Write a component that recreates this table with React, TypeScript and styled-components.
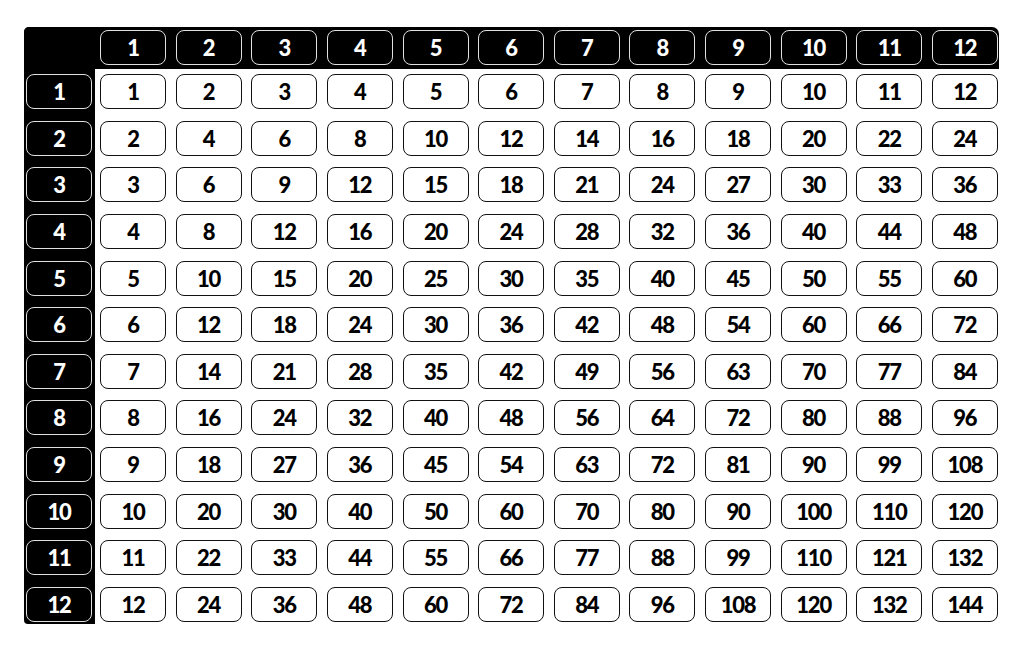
import React from 'react';
import styled, { createGlobalStyle } from 'styled-components';

const GlobalStyle = createGlobalStyle`
  html, body {
    margin: 0;
    padding: 0;
    background: #fff;
  }
  body {
    font-family: Lato, "Open Sans", sans-serif;
  }
`;

const Page = styled.div`
  width: 1024px;
  height: 652px;
  padding: 27px 0 0 24px;
  box-sizing: border-box;
`;

const Board = styled.div`
  width: 975px;
  height: 597px;
  display: grid;
  grid-template-columns: 71px 1fr;
  grid-template-rows: 42px 1fr;
  background: #000;
  border-radius: 5px 7px 0 4px;
  overflow: hidden;
`;

const Corner = styled.div`
  background: #000;
`;

const HeaderRow = styled.div`
  display: flex;
  justify-content: space-between;
  padding: 3px 1px 4px 5px;
`;

const LabelColumn = styled.div`
  display: flex;
  flex-direction: column;
  justify-content: space-between;
  padding: 5px 3px 2px 2px;
`;

const Panel = styled.div`
  background: #fff;
  display: flex;
  flex-direction: column;
  justify-content: space-between;
  padding: 5px 1px 2px 5px;
`;

const Row = styled.div`
  display: flex;
  justify-content: space-between;
`;

const Cell = styled.div<{ $dark?: boolean }>`
  width: 66px;
  height: 35px;
  box-sizing: border-box;
  border-radius: 8px;
  border: 1.6px solid ${p => (p.$dark ? '#e0e0e0' : '#111')};
  background: ${p => (p.$dark ? '#000' : '#fff')};
  color: ${p => (p.$dark ? '#fff' : '#000')};
  display: flex;
  align-items: center;
  justify-content: center;
  font-size: 22px;
  font-weight: 900;
  letter-spacing: -1.2px;
  line-height: 1;
  padding-top: 1px;
`;

const nums = Array.from({ length: 12 }, (_, i) => i + 1);

export default function App() {
  return (
    <>
      <GlobalStyle />
      <Page>
        <Board>
          <Corner />
          <HeaderRow>
            {nums.map(n => (
              <Cell key={n} $dark>{n}</Cell>
            ))}
          </HeaderRow>
          <LabelColumn>
            {nums.map(n => (
              <Cell key={n} $dark>{n}</Cell>
            ))}
          </LabelColumn>
          <Panel>
            {nums.map(r => (
              <Row key={r}>
                {nums.map(c => (
                  <Cell key={c}>{r * c}</Cell>
                ))}
              </Row>
            ))}
          </Panel>
        </Board>
      </Page>
    </>
  );
}
